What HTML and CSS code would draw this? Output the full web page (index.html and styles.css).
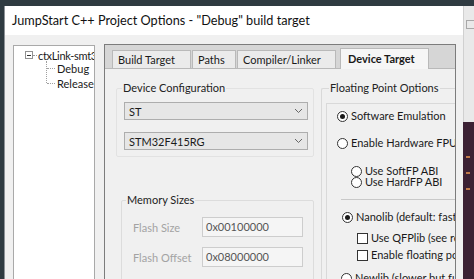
FILE: index.html
```html
<!DOCTYPE html>
<html lang="en">
<head>
  <meta charset="UTF-8">
  <title>JumpStart C++ Project Options</title>
  <link rel="stylesheet" href="styles.css">
</head>
<body>
  <div class="screen">
    <div class="dialog">
      <div class="titlebar">JumpStart C++ Project Options - "Debug" build target</div>
      <div class="dialog-body">
        <div class="tree">
          <div class="tree-root"><span class="toggle"></span><span class="dots"></span>ctxLink-smt3</div>
          <div class="tree-children">
            <div class="tree-item">Debug</div>
            <div class="tree-item">Release</div>
          </div>
        </div>

        <div class="tabs">
          <div class="tab-strip">
            <div class="tab tab-build">Build Target</div>
            <div class="tab tab-paths">Paths</div>
            <div class="tab tab-compiler">Compiler/Linker</div>
            <div class="tab tab-device active">Device Target</div>
          </div>
          <div class="tab-page">
            <div class="col-left">
              <fieldset class="group device-group">
                <legend>Device Configuration</legend>
                <div class="select">ST<svg class="chev" width="9" height="6" viewBox="0 0 9 6"><path d="M1 1l3.5 3.5L8 1" fill="none" stroke="#666" stroke-width="1"/></svg></div>
                <div class="select">STM32F415RG<svg class="chev" width="9" height="6" viewBox="0 0 9 6"><path d="M1 1l3.5 3.5L8 1" fill="none" stroke="#666" stroke-width="1"/></svg></div>
              </fieldset>
              <fieldset class="group memory-group">
                <legend>Memory Sizes</legend>
                <div class="field"><span class="field-label">Flash Size</span><span class="input">0x00100000</span></div>
                <div class="field"><span class="field-label">Flash Offset</span><span class="input">0x08000000</span></div>
              </fieldset>
            </div>
            <div class="col-right">
              <fieldset class="group fp-group">
                <legend>Floating Point Options</legend>
                <div class="fp-box">
                  <div class="option opt-soft"><span class="radio checked"></span>Software Emulation</div>
                  <div class="option opt-hard"><span class="radio"></span>Enable Hardware FPU</div>
                  <div class="option opt-sub opt-softfp"><span class="radio"></span>Use SoftFP ABI</div>
                  <div class="option opt-sub opt-hardfp"><span class="radio"></span>Use HardFP ABI</div>
                  <div class="separator"></div>
                  <div class="option opt-nano"><span class="radio checked"></span>Nanolib (default: faster and smaller)</div>
                  <div class="option opt-check opt-qfp"><span class="checkbox"></span>Use QFPlib (see readme)</div>
                  <div class="option opt-check opt-float"><span class="checkbox"></span>Enable floating point printf</div>
                  <div class="option opt-newlib"><span class="radio"></span>Newlib (slower but full featured)</div>
                </div>
              </fieldset>
            </div>
          </div>
        </div>
      </div>
    </div>

    <div class="backwin">
      <div class="bw-top"></div>
      <div class="bw-light"><span class="bw-box"></span></div>
      <div class="bw-dark">
        <span class="bw-mark"></span>
        <span class="bw-mark"></span>
        <span class="bw-mark"></span>
      </div>
    </div>
  </div>
</body>
</html>
```

FILE: styles.css
```css
body {
  margin: 0;
  padding: 0;
  font-family: Lato, "Open Sans", sans-serif;
  color: #1a1a1a;
  background-color: #2f3b41;
}

.screen {
  display: flex;
  width: 474px;
  height: 279px;
  overflow: hidden;
  background-color: #2f3b41;
}

/* Dialog window */
.dialog {
  margin: 6px 0 0 4px;
  width: 458px;
  border-left: 1px solid #8d9297;
  display: flex;
  flex-direction: column;
  background-color: #f0f0f0;
}
.titlebar {
  height: 29px;
  line-height: 29px;
  padding-left: 7px;
  background-color: #fff;
  font-size: 12.7px;
  color: #111;
  white-space: nowrap;
}
.dialog-body {
  flex: 1;
  display: flex;
  padding: 10px 0 0 8px;
  min-height: 0;
}

/* Tree */
.tree {
  width: 80px;
  border: 1px solid #a9a9a9;
  border-bottom: none;
  background-color: #fff;
  font-size: 11px;
  overflow: hidden;
  white-space: nowrap;
  padding-top: 2px;
}
.tree-root {
  display: flex;
  align-items: center;
  height: 14px;
  padding-left: 11px;
  letter-spacing: -0.3px;
}
.toggle {
  position: relative;
  flex-shrink: 0;
  width: 6px;
  height: 6px;
  border: 1px solid #919191;
}
.toggle::after {
  content: "";
  position: absolute;
  left: 1px;
  top: 2.5px;
  width: 4px;
  height: 1px;
  background-color: #333;
}
.dots {
  flex-shrink: 0;
  width: 4px;
  border-top: 1px dotted #999;
  margin-right: 1px;
}
.tree-children {
  margin: -1px 0 0 32px;
  border-left: 1px dotted #a0a0a0;
  height: 22px;
}
.tree-item {
  display: flex;
  align-items: center;
  height: 15px;
}
.tree-item::before {
  content: "";
  width: 8px;
  border-top: 1px dotted #a0a0a0;
  margin-right: 2px;
}

/* Tab control */
.tabs {
  width: 350px;
  margin: -1px 0 0 9px;
  border: 1px solid #7c7c7c;
  border-bottom: none;
  display: flex;
  flex-direction: column;
  font-size: 11px;
}
.tab-strip {
  height: 23px;
  display: flex;
  align-items: flex-end;
  padding-left: 7px;
  background-color: #d6d6d6;
}
.tab {
  box-sizing: border-box;
  height: 18px;
  line-height: 17px;
  padding-left: 5px;
  margin-right: 1px;
  border: 1px solid #b9b9b9;
  border-bottom: none;
  background-color: #ebebeb;
  white-space: nowrap;
}
.tab-build {
  width: 79px;
}
.tab-paths {
  width: 44px;
}
.tab-compiler {
  width: 99px;
}
.tab-device {
  width: 89px;
}
.tab.active {
  height: 21px;
  line-height: 20px;
  margin: 0 0 -1px 3px;
  padding-left: 7px;
  background-color: #f6f6f6;
  font-weight: bold;
  position: relative;
}
.tab-page {
  flex: 1;
  display: flex;
  gap: 7px;
  padding: 12px 0 0 11px;
  border-top: 1px solid #b9b9b9;
  overflow: hidden;
}

/* Group boxes */
.group {
  margin: 0;
  border: 1px solid #d9d9d9;
  border-radius: 2px;
  min-width: 0;
}
.group legend {
  line-height: 14px;
  padding: 0 1px;
  color: #222;
}
.col-left {
  width: 198px;
  flex-shrink: 0;
}
.device-group {
  padding: 7px 0 6px 7px;
  border-color: #e2e2e2;
}
.device-group legend {
  margin-left: -2px;
}
.select {
  display: flex;
  align-items: center;
  justify-content: space-between;
  width: 174px;
  height: 16px;
  padding: 0 4px;
  margin-bottom: 12px;
  border: 1px solid #adadad;
  background-color: #e6e6e6;
}
.select:last-child {
  margin-bottom: 0;
}
.memory-group {
  margin: 36px 0 0 5px;
  padding: 10px 0 20px 11px;
  border-color: #dcdcdc;
}
.memory-group legend {
  margin-left: -7px;
}
.field {
  display: flex;
  align-items: center;
  height: 20px;
  margin-bottom: 10px;
}
.field-label {
  width: 69px;
  color: #a3a3a3;
}
.input {
  width: 96px;
  height: 18px;
  line-height: 18px;
  padding-left: 3px;
  border: 1px solid #cdcdcd;
  background-color: #f5f5f5;
  color: #555;
}

/* Floating point options */
.col-right {
  flex-shrink: 0;
  width: 160px;
}
.fp-group {
  padding: 8px 0 0 4px;
  border-right: none;
  border-bottom: none;
}
.fp-group legend {
  margin-left: 3px;
}
.fp-box {
  border: 1px solid #d9d9d9;
  border-right: none;
  padding: 7px 0 20px 10px;
  white-space: nowrap;
}
.option {
  display: flex;
  align-items: center;
  height: 10px;
  line-height: 10px;
}
.radio, .checkbox {
  flex-shrink: 0;
  width: 9px;
  height: 9px;
  margin-right: 3px;
  border: 1px solid #333;
  background-color: #fff;
}
.radio {
  border-radius: 50%;
  display: flex;
  align-items: center;
  justify-content: center;
}
.radio.checked::after {
  content: "";
  width: 5px;
  height: 5px;
  border-radius: 50%;
  background-color: #1a1a1a;
}
.opt-hard {
  margin-top: 17px;
}
.opt-sub {
  padding-left: 14px;
}
.opt-softfp {
  margin-top: 18px;
}
.opt-hardfp {
  margin-top: 1px;
}
.separator {
  height: 1px;
  margin: 12px 0 0 4px;
  background-color: #c9c9c9;
}
.opt-nano {
  margin-top: 12px;
  padding-left: 5px;
}
.opt-check {
  padding-left: 20px;
}
.opt-qfp {
  margin-top: 11px;
}
.opt-float {
  margin-top: 7px;
}
.opt-newlib {
  margin-top: 13px;
  padding-left: 4px;
}

/* Window behind the dialog */
.backwin {
  width: 11px;
  display: flex;
  flex-direction: column;
}
.bw-top {
  height: 6px;
  background-color: #2f3b41;
}
.bw-light {
  height: 102px;
  background-color: #e9e9e9;
  border-left: 1px solid #d0d0d0;
  padding-top: 14px;
}
.bw-box {
  display: block;
  width: 8px;
  height: 7px;
  margin-left: 2px;
  border: 1px solid #a8a8a8;
}
.bw-dark {
  flex: 1;
  background-color: #3c2134;
  display: flex;
  flex-direction: column;
  gap: 14px;
  padding-top: 34px;
}
.bw-mark {
  display: block;
  width: 4px;
  height: 2px;
  margin-left: 3px;
  background-color: #c07a4a;
}
```
